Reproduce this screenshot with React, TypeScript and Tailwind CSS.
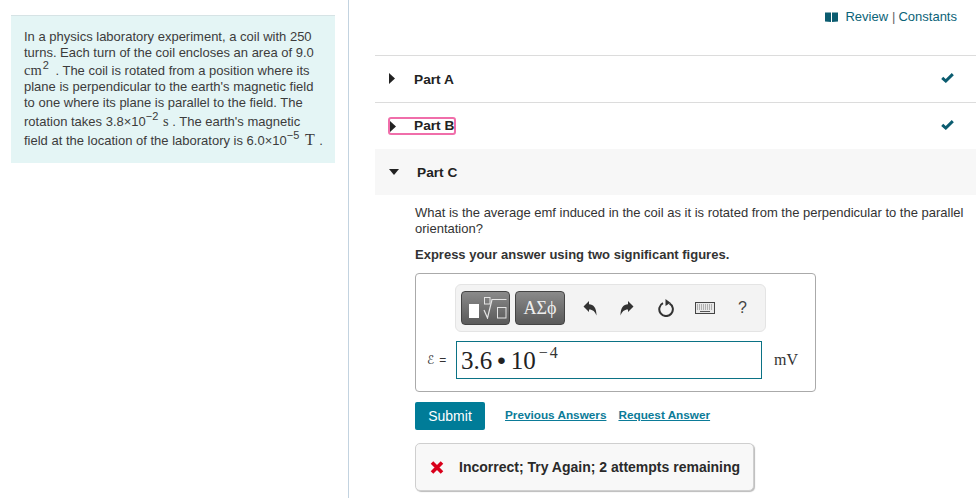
import React from "react";

const sans = "font-['Liberation_Sans',Arial,sans-serif]";
const serif = "font-['Liberation_Serif','Times_New_Roman',serif]";

function Check() {
  return (
    <svg width="13" height="10" viewBox="0 0 13 10" className="block">
      <path d="M1.2 4.8 L4.8 8 L11.8 1.2" fill="none" stroke="#0b5c70" strokeWidth="3" />
    </svg>
  );
}

function Right() {
  return (
    <svg width="6" height="11" viewBox="0 0 6 11" className="block shrink-0">
      <path d="M0 0 L6 5.5 L0 11 Z" fill="#222" />
    </svg>
  );
}

function Down() {
  return (
    <svg width="10" height="6" viewBox="0 0 10 6" className="block">
      <path d="M0 0 L10 0 L5 6 Z" fill="#222" />
    </svg>
  );
}

function Book() {
  return (
    <svg width="13" height="10" viewBox="0 0 13 10" className="block">
      <path d="M0 0.5 L6 0.5 L6 10 L0 9.5 Z M7 0.5 L13 0.5 L13 9.5 L7 10 Z" fill="#0b5c70" />
    </svg>
  );
}

function Templates() {
  return (
    <svg width="38" height="22" viewBox="0 0 38 22" className="block">
      <rect x="0" y="7" width="10" height="14" fill="#fff" />
      <rect x="15.5" y="0.5" width="5.5" height="6.5" fill="none" stroke="#e4e4e4" strokeWidth="1" />
      <path d="M15 13 L18.5 21 L23 2.5 L37.5 2.5" fill="none" stroke="#e4e4e4" strokeWidth="1.2" />
      <rect x="28.5" y="10.5" width="8.5" height="10.5" fill="none" stroke="#e4e4e4" strokeWidth="1" />
    </svg>
  );
}

function Undo() {
  return (
    <svg width="14" height="15" viewBox="0 0 14 15" className="block">
      <path d="M0.5 5.5 L6 0 L6 3.3 C10.5 3.3 13.5 7 13.5 14.5 C12 10.5 10 8.4 6 8.4 L6 11 Z" fill="#333" />
    </svg>
  );
}

function Redo() {
  return (
    <svg width="14" height="15" viewBox="0 0 14 15" className="block">
      <path d="M13.5 5.5 L8 0 L8 3.3 C3.5 3.3 0.5 7 0.5 14.5 C2 10.5 4 8.4 8 8.4 L8 11 Z" fill="#333" />
    </svg>
  );
}

function Reset() {
  return (
    <svg width="16" height="18" viewBox="0 0 16 18" className="block">
      <path d="M5 4.2 A6.8 6.8 0 1 0 11.5 4.4" fill="none" stroke="#333" strokeWidth="2" />
      <path d="M7.5 0 L12.5 3.8 L7.5 7 Z" fill="#333" />
    </svg>
  );
}

function Keyboard() {
  return (
    <svg width="20" height="12" viewBox="0 0 20 12" className="block">
      <rect x="0.5" y="0.5" width="19" height="11" fill="#e8e8e8" stroke="#444" />
      <path d="M2 3 H18 M2 5 H18 M2 7 H18" stroke="#777" strokeWidth="1" strokeDasharray="1 1" />
      <path d="M5 9.5 H15" stroke="#555" strokeWidth="1" />
    </svg>
  );
}

function Cross() {
  return (
    <svg width="14" height="13" viewBox="0 0 14 13" className="block">
      <path d="M2 1.5 L12 11.5 M12 1.5 L2 11.5" stroke="#d9001b" strokeWidth="3.6" />
    </svg>
  );
}

function PartRow({ label, outlined }: { label: string; outlined?: boolean }) {
  return (
    <div className="h-[47px] border-t border-[#dcdcdc] flex items-center pl-[14px] pr-[22px]">
      <div
        className={
          outlined
            ? "flex items-center h-[18px] w-[68px] -ml-px border-2 border-[#f06eaa] rounded-[3px] text-[13.7px] whitespace-nowrap"
            : "flex items-center text-[13.7px] whitespace-nowrap"
        }
      >
        <Right />
        <span className={outlined ? "ml-[18px] font-bold text-[#222]" : "ml-[19px] pt-[2px] font-bold text-[#222]"}>{label}</span>
      </div>
      <div className="ml-auto pb-[2px]">
        <Check />
      </div>
    </div>
  );
}

export default function App() {
  return (
    <div className={`${sans} w-[976px] h-[498px] bg-white overflow-hidden flex text-[#333]`}>
      <div className="w-[349px] h-full shrink-0 border-r border-[#c3d3e0] pl-[11px] pr-[13px] pt-[15px]">
        <div className="w-[324px] h-[148px] bg-[#e4f5f5] border-t border-[#d6e3e5] pl-[13px] pt-[13px] text-[13px] leading-[16px] text-[#3c3c3c]">
          <div>In a physics laboratory experiment, a coil with 250</div>
          <div>turns. Each turn of the coil encloses an area of 9.0</div>
          <div className="h-[18px] leading-[19px]">
            <span className={`${serif} text-[14.5px]`}>cm</span>
            <sup className="text-[11px] top-[-6px] ml-px mr-[3px]">2</sup> . The coil is rotated from a position where its
          </div>
          <div>plane is perpendicular to the earth's magnetic field</div>
          <div>to one where its plane is parallel to the field. The</div>
          <div className="h-[19px] leading-[21px]">
            rotation takes 3.8×10<sup className="text-[11px] top-[-6px]">−2</sup>{" "}
            <span className={`${serif} text-[14.5px] ml-px`}>s</span> . The earth's magnetic
          </div>
          <div className="h-[19px] leading-[20px]">
            field at the location of the laboratory is 6.0×10<sup className="text-[11px] top-[-6px]">−5</sup>{" "}
            <span className={`${serif} text-[16px] ml-[2px] mr-px`}>T</span> .
          </div>
        </div>
      </div>

      <div className="flex-1 pl-[26px]">
        <div className="h-[55px] pt-[9px] flex justify-end pr-[19px] text-[13px] leading-[15px]">
          <div className="flex items-center h-[15px] text-[#0b6378]">
            <Book />
            <span className="ml-[7px]">Review</span>
            <span className="ml-[4px] mr-[3px] text-[#666]">|</span>
            <span>Constants</span>
          </div>
        </div>

        <PartRow label="Part A" />
        <PartRow label="Part B" outlined />

        <div className="h-[46px] bg-[#f7f7f7] flex items-center pl-[14px] text-[13.7px]">
          <Down />
          <span className="ml-[18px] pt-[2px] font-bold text-[#222]">Part C</span>
        </div>

        <div className="pl-[40px] pr-[8px]">
          <p className="mt-[10px] text-[13px] leading-[16px] text-[#333]">
            What is the average emf induced in the coil as it is rotated from the perpendicular to the parallel orientation?
          </p>
          <p className="mt-[10px] text-[13px] leading-[16px] font-bold text-[#333]">
            Express your answer using two significant figures.
          </p>

          <div className="mt-[10px] w-[401px] h-[119px] border border-[#aaa] rounded-[4px] flex flex-col">
            <div className="ml-[39px] mt-[10px] w-[311px] h-[48px] bg-[#f3f3f3] border border-[#e4e4e4] rounded-[6px] flex items-center pl-[5px]">
              <div className="w-[49px] h-[34px] rounded-[4px] border border-[#444] bg-gradient-to-b from-[#8a8a8a] to-[#5a5a5a] flex items-center pl-[7px]">
                <Templates />
              </div>
              <div className={`${serif} ml-[5px] w-[50px] h-[34px] rounded-[4px] border border-[#444] bg-gradient-to-b from-[#8a8a8a] to-[#5a5a5a] flex items-center justify-center text-[#eee] text-[18px]`}>
                ΑΣϕ
              </div>
              <div className="ml-[18px]"><Undo /></div>
              <div className="ml-[23px]"><Redo /></div>
              <div className="ml-[24px]"><Reset /></div>
              <div className="ml-[21px]"><Keyboard /></div>
              <div className="ml-[23px] text-[16px] text-[#444]">?</div>
            </div>
            <div className="mt-[9px] flex items-center">
              <span className="font-['DejaVu_Sans',sans-serif] w-[26px] ml-[11px] text-[12px] whitespace-nowrap text-[#333]">
                ℰ<span className={`${sans} ml-[5px] text-[12px]`}>=</span>
              </span>
              <div className={`${serif} ml-[3px] w-[306px] h-[38px] border border-[#0b7285] pl-[4px] text-[25px] leading-[38px] text-[#222] whitespace-nowrap`}>
                3.6<span className={`${sans} ml-[5px] text-[24px] leading-[20px]`}>•</span>
                <span className="ml-[5px]">10</span>
                <sup className="text-[16px] top-[-11px] ml-[3px] text-[#333]">−<span className="ml-[2px]">4</span></sup>
              </div>
              <span className={`${serif} ml-[12px] text-[16px] text-[#333]`}>mV</span>
            </div>
          </div>

          <div className="mt-[10px] flex items-center">
            <div className="w-[70px] h-[28px] bg-[#007c98] rounded-[2px] text-white text-[14px] flex items-center justify-center">
              Submit
            </div>
            <span className="ml-[20px] pb-[2px] text-[11.75px] font-bold underline text-[#0b7b98]">Previous Answers</span>
            <span className="ml-[12px] pb-[2px] text-[11.75px] font-bold underline text-[#0b7b98]">Request Answer</span>
          </div>

          <div className="mt-[13px] w-[339px] h-[48px] bg-[#f8f8f8] border border-[#cfcfcf] rounded-[5px] shadow-[1px_1px_1px_#bbb] flex items-center pl-[14px]">
            <Cross />
            <span className="ml-[15px] pt-px text-[14px] font-bold text-[#2a2a2a] whitespace-nowrap">
              Incorrect; Try Again; 2 attempts remaining
            </span>
          </div>
        </div>
      </div>
    </div>
  );
}
